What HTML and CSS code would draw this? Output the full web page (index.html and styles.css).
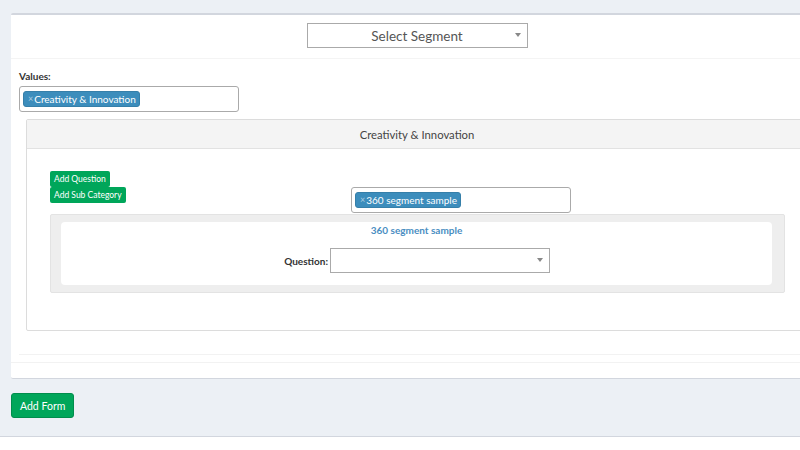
FILE: index.html
```html
<!DOCTYPE html>
<html>
<head>
<meta charset="utf-8">
<link rel="stylesheet" href="styles.css">
</head>
<body>
<div class="page">
  <div class="card">
    <div class="segment-row">
      <div class="select select-segment">
        <span class="select-text">Select Segment</span>
        <span class="caret"></span>
      </div>
    </div>
    <div class="values">
      <div class="label">Values:</div>
      <div class="tag-input">
        <span class="tag"><span class="tag-x">×</span>Creativity &amp; Innovation</span>
      </div>
    </div>
    <div class="panel">
      <div class="panel-head">Creativity &amp; Innovation</div>
      <div class="panel-body">
        <div class="action-row">
          <div class="btn-stack">
            <span class="btn-sm">Add Question</span>
            <span class="btn-sm">Add Sub Category</span>
          </div>
          <div class="tag-input tag-input-2">
            <span class="tag"><span class="tag-x">×</span>360 segment sample</span>
          </div>
        </div>
        <div class="well">
          <div class="inner">
            <div class="inner-title">360 segment sample</div>
            <div class="q-row">
              <span class="q-label">Question:</span>
              <div class="select select-q"><span class="caret"></span></div>
            </div>
          </div>
        </div>
      </div>
    </div>
    <div class="line line-a"></div>
    <div class="line line-b"></div>
  </div>
  <div class="footer">
    <span class="btn-form">Add Form</span>
  </div>
</div>
</body>
</html>
```

FILE: styles.css
```css
html, body {
  margin: 0;
  padding: 0;
  background: #ffffff;
  overflow: hidden;
  font-family: Lato, "Open Sans", sans-serif;
  color: #333;
}
.page {
  width: 800px;
  height: 437px;
  background: #ecf0f5;
  border-bottom: 1px solid #d2d6de;
  padding-top: 13px;
  box-sizing: border-box;
  overflow: hidden;
}
.card {
  margin-left: 11px;
  width: 812px;
  height: 366px;
  box-sizing: border-box;
  background: #fff;
  border-top: 2px solid #d2d6de;
  border-bottom: 1px solid #d2d6de;
  border-radius: 2px;
}
.segment-row {
  display: flex;
  justify-content: center;
  padding-top: 8px;
  height: 44px;
  border-bottom: 1px solid #f4f4f4;
  box-sizing: border-box;
}
.select {
  position: relative;
  box-sizing: border-box;
  border: 1px solid #aaa;
  background: #fff;
}
.select-segment {
  width: 221px;
  height: 25px;
  display: flex;
  align-items: center;
  justify-content: center;
}
.select-text {
  font-size: 13.5px;
  color: #555;
}
.caret {
  position: absolute;
  right: 6px;
  top: 9px;
  width: 0;
  height: 0;
  border-left: 3px solid transparent;
  border-right: 3px solid transparent;
  border-top: 4px solid #888;
}
.values {
  padding: 11px 0 0 8px;
}
.label {
  font-size: 10px;
  font-weight: bold;
  color: #333;
  line-height: 12px;
  margin-bottom: 4px;
}
.tag-input {
  width: 220px;
  height: 26px;
  box-sizing: border-box;
  border: 1px solid #aaa;
  border-radius: 3px;
  padding: 4px 3px;
  display: flex;
  align-items: flex-start;
}
.tag {
  display: inline-flex;
  align-items: center;
  height: 16px;
  padding: 0 3px 0 4px;
  background: #3c8dbc;
  border: 1px solid #367fa9;
  box-sizing: border-box;
  border-radius: 3px;
  color: #fff;
  font-size: 10px;
  line-height: 14px;
}
.tag-x {
  color: rgba(255,255,255,0.55);
  margin-right: 1px;
  font-size: 9px;
}
.panel {
  margin: 7px 0 0 15px;
  width: 782px;
  height: 212px;
  box-sizing: border-box;
  border: 1px solid #dcdcdc;
  border-radius: 2px;
}
.panel-head {
  height: 28px;
  background: #f4f4f4;
  border-bottom: 1px solid #e2e2e2;
  display: flex;
  align-items: center;
  justify-content: center;
  font-size: 11.3px;
  color: #444;
}
.panel-body {
  padding: 22px 0 0 23px;
}
.action-row {
  display: flex;
  align-items: flex-start;
}
.btn-stack {
  display: flex;
  flex-direction: column;
  align-items: flex-start;
  width: 301px;
}
.btn-sm {
  background: #00a65a;
  color: #fff;
  font-size: 8.5px;
  height: 16px;
  line-height: 16px;
  padding: 0 4px;
  border-radius: 2px;
}
.tag-input-2 {
  margin-top: 16px;
  margin-bottom: 1px;
}
.well {
  width: 735px;
  height: 79px;
  box-sizing: border-box;
  background: #eeeeee;
  border: 1px solid #e3e3e3;
  border-radius: 2px;
  padding: 7px 12px 0 10px;
}
.inner {
  background: #fff;
  border-radius: 4px;
  height: 63px;
  box-sizing: border-box;
  padding-top: 2px;
}
.inner-title {
  text-align: center;
  color: #4a8ec2;
  font-weight: bold;
  font-size: 10px;
  line-height: 12px;
}
.q-row {
  display: flex;
  align-items: center;
  margin-top: 12px;
}
.q-label {
  width: 269px;
  text-align: right;
  font-size: 10px;
  font-weight: bold;
  color: #333;
  padding-right: 2px;
  box-sizing: border-box;
}
.select-q {
  width: 220px;
  height: 25px;
}
.line {
  height: 1px;
  background: #f2f2f2;
}
.line-a {
  margin: 23px 0 0 8px;
}
.line-b {
  margin-top: 7px;
}
.footer {
  padding: 14px 0 0 11px;
}
.btn-form {
  display: inline-block;
  background: #00a65a;
  color: #fff;
  font-size: 10.5px;
  height: 25px;
  line-height: 24px;
  padding: 0 8px;
  border-radius: 3px;
  border: 1px solid #008d4c;
  box-sizing: border-box;
}
```
